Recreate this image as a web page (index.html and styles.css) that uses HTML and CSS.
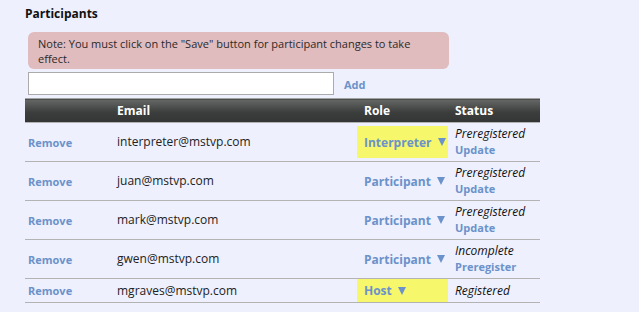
FILE: index.html
```html
<!DOCTYPE html>
<html>
<head>
<meta charset="utf-8">
<link rel="stylesheet" href="styles.css">
</head>
<body>
<div class="panel">
  <h2 class="title">Participants</h2>
  <div class="note">Note: You must click on the "Save" button for participant changes to take effect.</div>
  <div class="add-row">
    <input class="add-input" type="text">
    <a class="link add-link">Add</a>
  </div>
  <table class="grid">
    <colgroup>
      <col class="c-remove"><col class="c-email"><col class="c-role"><col class="c-status">
    </colgroup>
    <thead>
      <tr><th></th><th>Email</th><th class="th-role">Role</th><th>Status</th></tr>
    </thead>
    <tbody>
      <tr>
        <td><a class="link">Remove</a></td>
        <td class="email">interpreter@mstvp.com</td>
        <td><div class="role hl">Interpreter<svg class="caret" viewBox="0 0 8 8"><polygon points="0,0 8,0 4,8"/></svg></div></td>
        <td><div class="state">Preregistered</div><a class="link">Update</a></td>
      </tr>
      <tr>
        <td><a class="link">Remove</a></td>
        <td class="email">juan@mstvp.com</td>
        <td><div class="role">Participant<svg class="caret" viewBox="0 0 8 8"><polygon points="0,0 8,0 4,8"/></svg></div></td>
        <td><div class="state">Preregistered</div><a class="link">Update</a></td>
      </tr>
      <tr>
        <td><a class="link">Remove</a></td>
        <td class="email">mark@mstvp.com</td>
        <td><div class="role">Participant<svg class="caret" viewBox="0 0 8 8"><polygon points="0,0 8,0 4,8"/></svg></div></td>
        <td><div class="state">Preregistered</div><a class="link">Update</a></td>
      </tr>
      <tr>
        <td><a class="link">Remove</a></td>
        <td class="email">gwen@mstvp.com</td>
        <td><div class="role">Participant<svg class="caret" viewBox="0 0 8 8"><polygon points="0,0 8,0 4,8"/></svg></div></td>
        <td><div class="state">Incomplete</div><a class="link">Preregister</a></td>
      </tr>
      <tr class="short">
        <td><a class="link">Remove</a></td>
        <td class="email">mgraves@mstvp.com</td>
        <td><div class="role hl compact">Host<svg class="caret" viewBox="0 0 8 8"><polygon points="0,0 8,0 4,8"/></svg></div></td>
        <td><div class="state">Registered</div></td>
      </tr>
    </tbody>
  </table>
</div>
</body>
</html>
```
FILE: styles.css
```css
html, body {
  margin: 0;
  padding: 0;
  background: #eef0fd;
}
body {
  font-family: "Open Sans", "Noto Sans", sans-serif;
  color: #222;
  font-size: 12px;
}
.panel {
  padding: 6px 0 0 25px;
}
.title {
  margin: 0;
  font-size: 12px;
  line-height: 16px;
  font-weight: 700;
  color: #111;
}
.note {
  margin: 10px 0 0 3px;
  width: 421px;
  box-sizing: border-box;
  height: 37px;
  padding: 4px 10px 3px 10px;
  background: #e0bcbf;
  border-radius: 6px;
  font-size: 11px;
  line-height: 15px;
  color: #2a2a2a;
}
.add-row {
  display: flex;
  align-items: center;
  gap: 10px;
  margin: 3px 0 0 3px;
}
.add-input {
  width: 306px;
  height: 23px;
  box-sizing: border-box;
  margin: 0;
  border: 1px solid #ababab;
  background: #fff;
  padding: 0 4px;
}
.link {
  color: #6b92ca;
  font-weight: 700;
  font-size: 11px;
  line-height: 15px;
  text-decoration: none;
}
.add-link {
  font-size: 11px;
  padding-top: 1px;
}
.grid {
  margin-top: 3px;
  width: 515px;
  border-collapse: collapse;
  table-layout: fixed;
}
.c-remove { width: 89px; }
.c-email { width: 240px; }
.c-role { width: 98px; }
.c-status { width: 88px; }
.grid th {
  height: 23px;
  padding: 0 3px;
  text-align: left;
  font-size: 12px;
  line-height: 16px;
  font-weight: 700;
  color: #fff;
  background: linear-gradient(#666867, #3c3e3d 55%, #333534);
  border-top: 1px solid #a2a2a2;
  border-bottom: 1px solid #b3b3b3;
}
.grid th.th-role {
  padding-left: 10px;
}
.grid td {
  height: 38px;
  padding: 0 3px;
  vertical-align: middle;
  border-bottom: 1px solid #b3b3b3;
}
.grid tr.short td {
  height: 23px;
}
.email {
  font-size: 12px;
  line-height: 16px;
  color: #222;
}
.role {
  display: flex;
  align-items: center;
  width: 91px;
  height: 32px;
  box-sizing: border-box;
  padding-left: 7px;
  font-size: 12px;
  font-weight: 700;
  color: #6b92ca;
  white-space: nowrap;
}
.role.hl {
  background: #f6f76b;
}
.role.compact {
  height: 23px;
}
.caret {
  width: 8px;
  height: 8px;
  margin-left: 6px;
  fill: #6b92ca;
}
.state {
  font-style: italic;
  font-size: 12px;
  line-height: 15px;
  color: #111;
}
```
